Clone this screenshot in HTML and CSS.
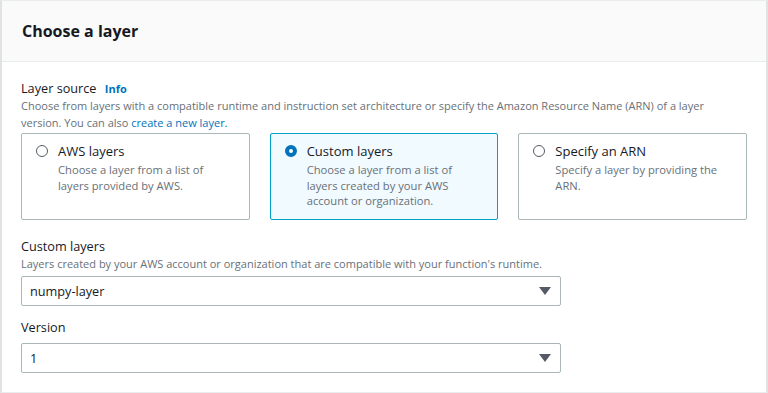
FILE: index.html
```html
<!DOCTYPE HTML>
<html>
<head>
  <title>Choose a layer</title>
  <link rel="stylesheet" href="styles.css">
</head>
<body>
  <div class="panel">
    <div class="panel-header">
      <h2>Choose a layer</h2>
    </div>
    <div class="panel-body">
      <div class="field source">
        <div class="label">Layer source <a class="info" href="#">Info</a></div>
        <div class="hint">Choose from layers with a compatible runtime and instruction set architecture or specify the Amazon Resource Name (ARN) of a layer version. You can also <a href="#">create a new layer.</a></div>
        <div class="tiles">
          <div class="tile">
            <span class="radio"></span>
            <div>
              <div class="tile-title">AWS layers</div>
              <div class="tile-desc">Choose a layer from a list of layers provided by AWS.</div>
            </div>
          </div>
          <div class="tile selected">
            <span class="radio checked"></span>
            <div>
              <div class="tile-title">Custom layers</div>
              <div class="tile-desc">Choose a layer from a list of layers created by your AWS account or organization.</div>
            </div>
          </div>
          <div class="tile">
            <span class="radio"></span>
            <div>
              <div class="tile-title">Specify an ARN</div>
              <div class="tile-desc">Specify a layer by providing the ARN.</div>
            </div>
          </div>
        </div>
      </div>

      <div class="field">
        <div class="label">Custom layers</div>
        <div class="hint small">Layers created by your AWS account or organization that are compatible with your function's runtime.</div>
        <div class="select">
          <span>numpy-layer</span>
          <svg width="12" height="8" viewBox="0 0 12 8"><path d="M0 0 H12 L6 8 Z" fill="#545b64"/></svg>
        </div>
      </div>

      <div class="field version">
        <div class="label">Version</div>
        <div class="select">
          <span>1</span>
          <svg width="12" height="8" viewBox="0 0 12 8"><path d="M0 0 H12 L6 8 Z" fill="#545b64"/></svg>
        </div>
      </div>
    </div>
  </div>
</body>
</html>
```

FILE: styles.css
```css
body {
  margin: 0;
  font-family: "Open Sans", "Noto Sans", sans-serif;
  color: #16191f;
  background: #ffffff;
}

a {
  color: #0073bb;
  text-decoration: none;
}

.panel {
  height: 393px;
  border: 1px solid #eaeded;
  border-left: 2px solid #dfe3e3;
  border-right: 2px solid #dfe3e3;
  box-sizing: border-box;
}

.panel-header {
  background-color: #fafafa;
  border-bottom: 1px solid #eaeded;
  padding: 0 20px;
  height: 60px;
  display: flex;
  align-items: center;
}

.panel-header h2 {
  margin: 0;
  font-size: 16px;
  font-weight: 700;
}

.panel-body {
  padding: 18px 19px 0 19px;
}

.field {
  margin-bottom: 17px;
}

.label {
  font-size: 12.7px;
  line-height: 18px;
}

.source .label {
  line-height: 16px;
}

.info {
  font-size: 11px;
  font-weight: 700;
  margin-left: 5px;
}

.hint {
  font-size: 11px;
  line-height: 17px;
  color: #687078;
}

.hint.small {
  line-height: 16px;
  margin-top: 1px;
  margin-bottom: 4px;
}

.tiles {
  display: flex;
  gap: 20px;
  margin-top: 2px;
}

.tile {
  flex: 1;
  height: 87px;
  box-sizing: border-box;
  border: 1px solid #aab7b8;
  border-radius: 2px;
  padding: 8px 20px 8px 14px;
  display: flex;
  gap: 10px;
}

.tile.selected {
  background-color: #f1faff;
  border-color: #00a1c9;
}

.radio {
  flex: none;
  width: 12px;
  height: 12px;
  margin-top: 3px;
  border: 1px solid #545b64;
  border-radius: 50%;
  box-sizing: border-box;
}

.radio.checked {
  border: 4px solid #0073bb;
  background: #ffffff;
}

.tile-title {
  font-size: 13px;
  line-height: 18px;
  margin-bottom: 2px;
}

.tile-desc {
  font-size: 11.2px;
  line-height: 15.5px;
  color: #687078;
}

.select {
  width: 540px;
  height: 30px;
  box-sizing: border-box;
  border: 1px solid #aab7b8;
  border-radius: 2px;
  padding: 0 9px 0 8px;
  display: flex;
  align-items: center;
  justify-content: space-between;
  font-size: 12.7px;
}

.field.version {
  margin-top: -5px;
}

.field.version .label {
  margin-bottom: 7px;
}
```
